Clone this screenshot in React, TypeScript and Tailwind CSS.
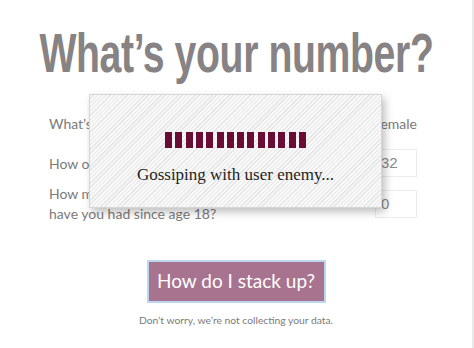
import React from 'react';

const bars = Array.from({ length: 14 });

export default function App() {
  return (
    <div className="relative h-[348px] w-[474px] overflow-hidden border-r-2 border-[#e9e9e9] bg-white">
      <div className="mt-[25px] flex h-[56px] justify-center">
        <h1 className="shrink-0 scale-x-[0.7] whitespace-nowrap font-['Liberation_Sans',sans-serif] text-[56px] font-bold leading-[56px] tracking-[-0.01em] text-[#878284]">
          What’s your number?
        </h1>
      </div>

      {/* form rows */}
      <div className="ml-[49px] mt-[30px] w-[368px] font-['Lato',sans-serif] text-[14px] text-[#7c7a7b]">
        <div className="flex h-[24px] items-center justify-between">
          <span>What’s your gender?</span>
          <span className="flex gap-3">
            <span>Male</span>
            <span>Female</span>
          </span>
        </div>
        <div className="mt-[14px] flex h-[28px] items-center justify-between">
          <span>How old are you?</span>
          <div className="flex h-[28px] w-[42px] items-center border border-[#ececec] px-[5px] font-['Liberation_Sans',sans-serif] text-[15px] text-[#8a8a8a]">
            32
          </div>
        </div>
        <div className="mt-[7px] flex items-center justify-between">
          <span className="leading-[20px]">
            How many sexual partners
            <br />
            have you had since age 18?
          </span>
          <div className="flex h-[28px] w-[42px] items-center border border-[#ececec] px-[5px] font-['Liberation_Sans',sans-serif] text-[15px] text-[#8a8a8a]">
            0
          </div>
        </div>
      </div>

      <div className="mt-[36px] flex justify-center">
        <button className="h-[43px] w-[179px] rounded-[1px] border-2 border-[#bcd6f0] bg-[#a8738f] font-['Lato',sans-serif] text-[19px] text-white">
          How do I stack up?
        </button>
      </div>
      <p className="mt-[10px] text-center font-['Lato',sans-serif] text-[10.3px] text-[#7a7a7a]">
        Don’t worry, we’re not collecting your data.
      </p>

      {/* loading overlay */}
      <div className="absolute left-[89px] top-[94px] flex h-[114px] w-[293px] flex-col items-center border border-[#d6d6d6] bg-[repeating-linear-gradient(135deg,#f8f8f8_0px,#f8f8f8_2px,#e6e6e6_2px,#e6e6e6_3px)] shadow-[3px_4px_8px_rgba(0,0,0,0.25)]">
        <div className="mt-[37px] flex gap-[3.3px]">
          {bars.map((_, i) => (
            <div key={i} className="h-[16px] w-[7px] bg-[#6a0d35]" />
          ))}
        </div>
        <p className="mt-[14px] font-['Liberation_Serif',serif] text-[17px] text-[#1e1e1e]">
          Gossiping with user enemy...
        </p>
      </div>
    </div>
  );
}
